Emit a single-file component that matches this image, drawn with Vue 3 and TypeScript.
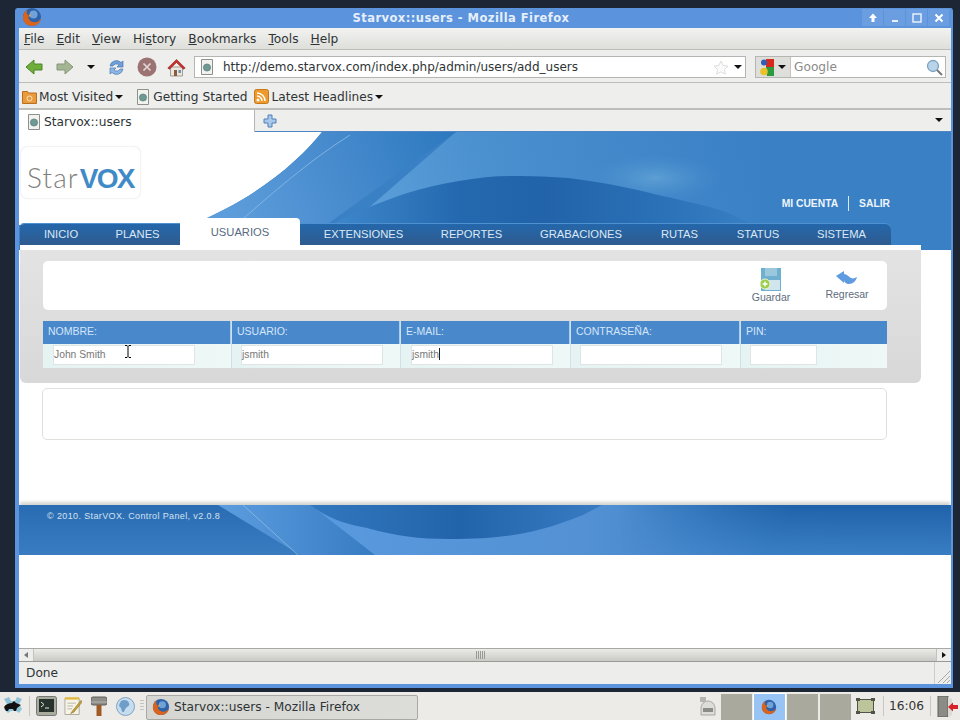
<script setup lang="ts">
const menus = [
  { key: 'F', rest: 'ile', pre: '' },
  { key: 'E', rest: 'dit', pre: '' },
  { key: 'V', rest: 'iew', pre: '' },
  { key: 's', rest: 'tory', pre: 'Hi' },
  { key: 'B', rest: 'ookmarks', pre: '' },
  { key: 'T', rest: 'ools', pre: '' },
  { key: 'H', rest: 'elp', pre: '' }
]

const navLeft = [
  { label: 'INICIO', width: 82 },
  { label: 'PLANES', width: 71 }
]
const navRight = [
  { label: 'EXTENSIONES', width: 119 },
  { label: 'REPORTES', width: 97 },
  { label: 'GRABACIONES', width: 122 },
  { label: 'RUTAS', width: 75 },
  { label: 'STATUS', width: 82 },
  { label: 'SISTEMA', width: 85 }
]

const columns = [
  { label: 'NOMBRE:', width: 189, pad: 10, input: 142, value: 'John Smith', caret: false },
  { label: 'USUARIO:', width: 169, pad: 9, input: 142, value: 'jsmith', caret: false },
  { label: 'E-MAIL:', width: 170, pad: 10, input: 142, value: 'jsmith', caret: true },
  { label: 'CONTRASEÑA:', width: 170, pad: 9, input: 142, value: '', caret: false },
  { label: 'PIN:', width: 146, pad: 9, input: 67, value: '', caret: false }
]

const workspaces = [false, true, false, false]
</script>

<template>
  <div class="desktop">
    <svg class="defs" width="0" height="0" aria-hidden="true">
      <symbol id="fox" viewBox="0 0 20 20">
        <circle cx="10" cy="10" r="9" fill="#2f62a8" />
        <circle cx="11.5" cy="7.5" r="4" fill="#6fa2d8" />
        <path d="M5 2.5C2 5 .8 8 1 11c.4 5 4.5 8 9 8 5 0 8.5-3.5 9-7.5-1.500 2.500-4 4-6.800 3.800C8.500 15 6 12.500 6.500 9 4.800 7.500 4.500 5 5 2.500z" fill="#d9641e" />
        <path d="M6.500 9c.5-1.500 1.800-1.800 3-1.500-1 .5-1.500 1.500-1 2.500z" fill="#f0a030" />
      </symbol>
      <symbol id="page" viewBox="0 0 14 16">
        <path d="M1.500.5h11v15h-11z" fill="#f2f2ee" stroke="#8d918c" />
        <circle cx="7" cy="8.500" r="3.600" fill="#6f9a94" stroke="#4f6f70" stroke-width=".6" />
      </symbol>
    </svg>

    <div class="window">
      <header class="titlebar">
        <svg class="title-fox" width="20" height="20"><use href="#fox" /></svg>
        <span class="title-text">Starvox::users - Mozilla Firefox</span>
        <div class="win-buttons">
          <span class="win-btn">
            <svg width="12" height="12" viewBox="0 0 12 12"><path d="M6 1.500 10 6H7.500v4h-3V6H2z" fill="#fff" /></svg>
          </span>
          <span class="win-btn">
            <svg width="12" height="12" viewBox="0 0 12 12"><path d="M3 8h6v2H3z" fill="#e8f0fa" /></svg>
          </span>
          <span class="win-btn">
            <svg width="12" height="12" viewBox="0 0 12 12"><path d="M2 2h8v8H2z" fill="none" stroke="#e8f0fa" stroke-width="1.500" /></svg>
          </span>
          <span class="win-btn">
            <svg width="12" height="12" viewBox="0 0 12 12"><path d="m2.500 2.500 7 7m0-7-7 7" stroke="#fff" stroke-width="2" /></svg>
          </span>
        </div>
      </header>

      <nav class="menubar">
        <span v-for="m in menus" :key="m.key + m.rest" class="menu-item">{{ m.pre }}<u>{{ m.key }}</u>{{ m.rest }}</span>
      </nav>

      <div class="toolbar">
        <svg width="18" height="16" viewBox="0 0 18 16" class="tb-back">
          <path d="M1 8 9 1v4h8v6H9v4z" fill="#6fae3a" stroke="#4c8526" />
        </svg>
        <svg width="18" height="16" viewBox="0 0 18 16" class="tb-forward">
          <path d="M17 8 9 1v4H1v6h8v4z" fill="#a3b592" stroke="#87987a" />
        </svg>
        <span class="tri tb-drop"></span>
        <svg width="19" height="19" viewBox="0 0 19 19" class="tb-reload">
          <path d="M3 8a6.500 6.500 0 0 1 11-3.500L16 3v6h-6l2-2a3.800 3.800 0 0 0-6 1z" fill="#6f9fd8" stroke="#4a78b2" stroke-width=".7" />
          <path d="M16 11a6.500 6.500 0 0 1-11 3.500L3 16v-6h6l-2 2a3.800 3.800 0 0 0 6-1z" fill="#8db6e4" stroke="#4a78b2" stroke-width=".7" />
        </svg>
        <svg width="20" height="20" viewBox="0 0 20 20" class="tb-stop">
          <circle cx="10" cy="10" r="9.500" fill="#9c7373" />
          <path d="m6.500 6.500 7 7m0-7-7 7" stroke="#e6d8d8" stroke-width="1.600" />
        </svg>
        <svg width="19" height="19" viewBox="0 0 19 19" class="tb-home">
          <path d="M3.500 9v9h12V9z" fill="#e9e7e0" stroke="#8a7a70" stroke-width=".7" />
          <path d="M.8 10 9.500 1.500 18.200 10l-1.700 1.200-7-6.700-7 6.700z" fill="#c8322c" stroke="#8f1f1c" stroke-width=".6" />
          <path d="M7 12h3v6H7z" fill="#8d5a3c" /><path d="M11.500 12h2.500v3h-2.500z" fill="#6c8fb0" />
        </svg>
        <div class="urlbar">
          <svg width="14" height="16" class="url-fav"><use href="#page" /></svg>
          <span class="url-text">http://demo.starvox.com/index.php/admin/users/add_users</span>
          <svg width="16" height="15" viewBox="0 0 16 15" class="url-star">
            <path d="m8 1 2.100 4.500 4.900.6-3.600 3.300 1 4.800L8 11.800 3.600 14.200l1-4.800L1 6.100l4.900-.6z" fill="#fbfbfb" stroke="#dcdcd8" />
          </svg>
          <span class="tri"></span>
        </div>
        <div class="searchbar">
          <div class="engine">
            <svg width="17" height="18" viewBox="0 0 17 18">
              <path d="M8 1h8v9H8z" fill="#d8281e" /><path d="M8 9h8v9H9z" fill="#2f9a3c" />
              <circle cx="6" cy="4.500" r="3" fill="#2f5fb4" /><circle cx="6" cy="13.500" r="3.800" fill="#e8c228" />
            </svg>
            <span class="tri"></span>
          </div>
          <span class="search-text">Google</span>
          <svg width="17" height="17" viewBox="0 0 17 17" class="search-glass">
            <circle cx="7" cy="7" r="5.500" fill="#b8d4ea" stroke="#7fa3bf" stroke-width="1.300" />
            <path d="m11 11 5 5" stroke="#777" stroke-width="2" />
          </svg>
        </div>
      </div>

      <div class="bookmarks">
        <svg width="15" height="15" viewBox="0 0 15 15">
          <path d="M.5 2.500h5l1 1.500h8v10.500H.5z" fill="#e99a3c" stroke="#b96f1e" /><circle cx="7.500" cy="9.500" r="2.500" fill="none" stroke="#fbe4c0" />
        </svg>
        <span class="bm-label bm-most">Most Visited</span>
        <span class="tri"></span>
        <svg width="14" height="16" class="bm-getting"><use href="#page" /></svg>
        <span class="bm-label">Getting Started</span>
        <svg width="15" height="15" viewBox="0 0 15 15" class="bm-rss">
          <rect x=".5" y=".5" width="14" height="14" rx="2" fill="#ee9a2c" stroke="#c77818" />
          <circle cx="4" cy="11" r="1.500" fill="#fff" />
          <path d="M3 7a5 5 0 0 1 5 5M3 4a8 8 0 0 1 8 8" fill="none" stroke="#fff" stroke-width="1.500" />
        </svg>
        <span class="bm-label">Latest Headlines</span>
        <span class="tri"></span>
      </div>

      <div class="tabbar">
        <div class="tab">
          <svg width="14" height="16"><use href="#page" /></svg>
          <span>Starvox::users</span>
        </div>
        <svg width="14" height="14" viewBox="0 0 14 14" class="tab-new">
          <path d="M5 1h4v4h4v4H9v4H5V9H1V5h4z" fill="#a9c8ec" stroke="#4f80b8" />
        </svg>
        <span class="tri tab-list"></span>
      </div>

      <main class="content">
        <section class="banner">
          <svg class="banner-art" viewBox="19 132 932 118" preserveAspectRatio="none" aria-hidden="true">
            <defs>
              <linearGradient id="bannerBase" gradientUnits="userSpaceOnUse" x1="330" y1="228" x2="760" y2="132">
                <stop offset="0" stop-color="#5fa2dc" />
                <stop offset=".4" stop-color="#4a8fce" />
                <stop offset="1" stop-color="#3a80c5" />
              </linearGradient>
              <linearGradient id="bannerMid" gradientUnits="userSpaceOnUse" x1="230" y1="225" x2="450" y2="132">
                <stop offset="0" stop-color="#5d9ddb" />
                <stop offset=".45" stop-color="#4a8dcf" />
                <stop offset="1" stop-color="#2d79bf" />
              </linearGradient>
              <linearGradient id="bannerDark" gradientUnits="userSpaceOnUse" x1="330" y1="0" x2="760" y2="0">
                <stop offset="0" stop-color="#3f88cc" />
                <stop offset=".3" stop-color="#2469af" />
                <stop offset=".5" stop-color="#2263a9" />
                <stop offset=".75" stop-color="#2a70b6" />
                <stop offset="1" stop-color="#3a80c5" />
              </linearGradient>
              <radialGradient id="bannerGlow">
                <stop offset="0" stop-color="#5d9fd4" />
                <stop offset="1" stop-color="#4a8fce" stop-opacity="0" />
              </radialGradient>
            </defs>
            <path d="M322 132C300 160 255 200 190 225H19V250H951V132z" fill="#3a80c5" />
            <path d="M456 132H760V250H320z" fill="url(#bannerBase)" />
            <path d="M322 132C300 160 255 200 190 225H326L456 132z" fill="url(#bannerMid)" />
            <path d="M236 225C270 195 310 160 350 135" fill="none" stroke="#8cbce6" stroke-width=".8" />
            <ellipse cx="655" cy="178" rx="65" ry="24" fill="url(#bannerGlow)" />
            <path d="M326 228C350 214 378 203 404 194 440 183 480 176 511 176 540 176 565 177 583 180 610 184 630 188 654 194 680 200 705 205 726 212L770 232V250H320z" fill="url(#bannerDark)" />
          </svg>
          <div class="logo">
            <span class="logo-star">Star</span><span class="logo-vox">VOX</span>
          </div>
          <div class="account">
            <span>MI CUENTA</span>
            <i class="account-sep"></i>
            <span>SALIR</span>
          </div>
          <div class="nav">
            <span v-for="n in navLeft" :key="n.label" class="nav-item" :style="{ width: n.width + 'px' }">{{ n.label }}</span>
            <span class="nav-active">USUARIOS</span>
            <span v-for="n in navRight" :key="n.label" class="nav-item" :style="{ width: n.width + 'px' }">{{ n.label }}</span>
          </div>
        </section>

        <section class="panel">
          <div class="actions">
            <div class="action action-save">
              <svg width="22" height="23" viewBox="0 0 22 23">
                <path d="M1 0h20v23H1z" fill="#6fb0d0" />
                <path d="M5 0h12v8H5z" fill="#9cc8de" />
                <path d="M5 12h15v10H5z" fill="#cfe6ee" />
                <circle cx="5" cy="16" r="5" fill="#9ccc4c" stroke="#e8f4d0" />
                <path d="M5 13.500v5M2.500 16h5" stroke="#fff" stroke-width="1.400" />
              </svg>
              <span>Guardar</span>
            </div>
            <div class="action action-back">
              <svg width="22" height="14" viewBox="0 0 22 14">
                <path d="M0 5 8 0v3c3 0 5 3 7 4 2 .8 4 .3 6-1-1 4-4 7-8 7-3 0-5-2-5-4v3z" fill="#5f9be0" />
              </svg>
              <span>Regresar</span>
            </div>
          </div>
          <div class="grid">
            <div v-for="c in columns" :key="c.label" class="col" :style="{ width: c.width + 'px' }">
              <div class="col-head">{{ c.label }}</div>
              <div class="col-cell" :style="{ paddingLeft: c.pad + 'px' }">
                <div class="field" :style="{ width: c.input + 'px' }">{{ c.value }}<i v-if="c.caret" class="caret"></i></div>
              </div>
            </div>
            <svg class="ibeam" width="8" height="13" viewBox="0 0 8 13" aria-hidden="true">
              <path d="M1 .5h2l1 1 1-1h2M4 1.500v10M1 12.500h2l1-1 1 1h2" fill="none" stroke="#000" stroke-width="1" />
            </svg>
          </div>
        </section>

        <section class="notice"></section>

        <footer class="page-footer">
          <svg class="footer-art" viewBox="19 505 932 50" preserveAspectRatio="none" aria-hidden="true">
            <defs>
              <linearGradient id="footLeft" x1="0" x2="0" y1="0" y2="1">
                <stop offset="0" stop-color="#2a6cb2" />
                <stop offset="1" stop-color="#3a7cc0" />
              </linearGradient>
              <linearGradient id="footBand" gradientUnits="userSpaceOnUse" x1="220" y1="0" x2="375" y2="0">
                <stop offset="0" stop-color="#5c9ddf" />
                <stop offset="1" stop-color="#377bc2" />
              </linearGradient>
              <linearGradient id="footLight" gradientUnits="userSpaceOnUse" x1="340" y1="0" x2="950" y2="0">
                <stop offset="0" stop-color="#5898dc" />
                <stop offset=".4" stop-color="#5391d4" />
                <stop offset=".7" stop-color="#3a7fc4" />
                <stop offset="1" stop-color="#397dc3" />
              </linearGradient>
              <linearGradient id="footDark" gradientUnits="userSpaceOnUse" x1="310" y1="0" x2="610" y2="0">
                <stop offset="0" stop-color="#3278bf" />
                <stop offset=".5" stop-color="#2264aa" />
                <stop offset="1" stop-color="#3a7dc4" />
              </linearGradient>
              <linearGradient id="footFade" gradientUnits="userSpaceOnUse" x1="620" y1="0" x2="790" y2="0">
                <stop offset="0" stop-color="#2163aa" stop-opacity="0" />
                <stop offset="1" stop-color="#2163aa" />
              </linearGradient>
              <linearGradient id="footFadeMask" x1="0" x2="0" y1="0" y2="1">
                <stop offset="0" stop-color="#fff" />
                <stop offset="1" stop-color="#000" />
              </linearGradient>
              <mask id="footMask" maskUnits="userSpaceOnUse" x="620" y="505" width="331" height="50">
                <rect x="620" y="505" width="331" height="50" fill="url(#footFadeMask)" />
              </mask>
            </defs>
            <path d="M19 505H951V555H19z" fill="url(#footLeft)" />
            <path d="M218 505 300 555H375L310 505z" fill="url(#footBand)" />
            <path d="M243 505 298 555" stroke="#8cbce6" stroke-width=".8" fill="none" />
            <path d="M310 505 375 555H951V505z" fill="url(#footLight)" />
            <rect x="620" y="505" width="331" height="50" fill="url(#footFade)" mask="url(#footMask)" />
            <path d="M310 505C330 520 350 525 367 528 395 536 420 539 449 539 480 539 505 537 525 533 550 528 570 520 583 515L602 505z" fill="url(#footDark)" />
          </svg>
          <span class="copyright">© 2010. StarVOX. Control Panel, v2.0.8</span>
        </footer>
      </main>

      <div class="scrollbar">
        <span class="sb-btn"><i class="sb-left"></i></span>
        <div class="sb-thumb"><i class="sb-grip"></i></div>
        <span class="sb-btn"><i class="sb-right"></i></span>
      </div>

      <div class="statusbar">
        <span>Done</span>
        <div class="resize">
          <svg width="14" height="14" viewBox="0 0 14 14"><path d="M13 1 1 13M13 6l-7 7M13 10l-3 3" stroke="#a9a9a4" fill="none" /></svg>
        </div>
      </div>
    </div>

    <div class="panelbar">
      <svg width="20" height="20" viewBox="0 0 20 20" class="pb-mouse">
        <path d="M1 3 6 1l2 4h4l2-4 5 2-3 5 3 5-3 4-3-2H8l-3 2-4-4 3-5z" fill="#8fc4d8" />
        <path d="M1 11c2-3 5-4 8-4l2-2 2 2 5 2-4 3-1 3h-2l-1-2H6l-1 2H3z" fill="#111" />
      </svg>
      <i class="pb-sep"></i>
      <svg width="21" height="20" viewBox="0 0 21 20" class="pb-term">
        <rect x=".5" y=".5" width="20" height="19" rx="2" fill="#a8ac9c" stroke="#777" />
        <rect x="3" y="3" width="15" height="13" fill="#27322c" />
        <path d="m5 6 3 2.500L5 11M9 12h4" stroke="#dfe8df" fill="none" />
      </svg>
      <svg width="18" height="20" viewBox="0 0 19 20" class="pb-note">
        <path d="M1 2h15v17H1z" fill="#f6f4e8" stroke="#aaa89a" />
        <path d="M1 2h15" stroke="#e2b93a" stroke-width="2.500" />
        <path d="M3.500 7h9M3.500 10h6M3.500 13h5" stroke="#b8b6a8" />
        <path d="M18 4 9 15l-2 3 3.500-1.500L19 6z" fill="#c9a13c" stroke="#7a6420" stroke-width=".5" />
      </svg>
      <svg width="16" height="20" viewBox="0 0 16 20" class="pb-hammer">
        <rect x="0" y="1" width="16" height="8" rx="2" fill="#8e8e88" stroke="#5f5f5a" />
        <path d="M0 6h16" stroke="#b5b5ae" />
        <path d="M5.500 9h5v11h-5z" fill="#a05a26" />
      </svg>
      <svg width="19" height="19" viewBox="0 0 19 19" class="pb-globe">
        <circle cx="9.500" cy="9.500" r="9" fill="#c6dcef" stroke="#7fa3c3" />
        <path d="M5 4c3-2 7-1 8 2s-1 3-3 5-1 4-3 4-1-4-3-5 0-4 1-6z" fill="#6f9dc8" />
      </svg>
      <i class="pb-handle"></i>
      <div class="task">
        <svg width="18" height="18"><use href="#fox" /></svg>
        <span>Starvox::users - Mozilla Firefox</span>
      </div>
      <div class="tray">
        <svg width="20" height="21" viewBox="0 0 20 21" class="pb-tray">
          <path d="M3 12a7 7 0 0 1 14 0v7H3z" fill="#dcdcd8" stroke="#a8a8a4" />
          <path d="M5 12h10v4H5z" fill="#8c8c88" />
          <path d="M2 1h6v5H2z" fill="#b4b4b0" />
        </svg>
        <div class="workspaces">
          <span v-for="(w, i) in workspaces" :key="i" class="ws" :class="{ 'ws-active': w }">
            <svg v-if="w" width="16" height="16"><use href="#fox" /></svg>
          </span>
        </div>
        <svg width="19" height="16" viewBox="0 0 19 16" class="pb-shot">
          <rect x="1.500" y="1.500" width="16" height="13" rx="1" fill="#bcc49a" stroke="#4f5348" />
          <path d="M0 0h4v3H0zM15 0h4v3h-4zM0 13h4v3H0zM15 13h4v3h-4z" fill="#4f5348" />
        </svg>
        <i class="pb-sep pb-sep-clock"></i>
        <span class="clock">16:06</span>
        <i class="pb-sep pb-sep-end"></i>
        <svg width="21" height="21" viewBox="0 0 21 21" class="pb-exit">
          <path d="M1 0h10v21H1z" fill="#8c8c86" stroke="#5f5f5a" />
          <path d="M11 1 15 3v16l-4 2z" fill="#dcdcd6" />
          <path d="M11 11 16 6.500V9h5v4h-5v2.500z" fill="#d8222a" />
        </svg>
      </div>
    </div>
  </div>
</template>

<style>
html,
body {
  margin: 0;
  background: #1c2634;
}
</style>

<style scoped>
.desktop {
  width: 960px;
  height: 720px;
  overflow: hidden;
  display: flex;
  flex-direction: column;
  padding-top: 8px;
  box-sizing: border-box;
  background: #1c2634;
  font-family: "DejaVu Sans", sans-serif;
  font-size: 12.2px;
  color: #2e3436;
}
.defs {
  position: absolute;
}
.window {
  width: 938px;
  height: 680px;
  margin-left: 15px;
  box-sizing: border-box;
  border: solid #5b93dc;
  border-width: 0 2px 4px 4px;
  border-radius: 3px 3px 0 0;
  display: flex;
  flex-direction: column;
  background: #ededeb;
}
.titlebar {
  height: 20px;
  display: flex;
  align-items: center;
  justify-content: center;
  padding-right: 48px;
  position: relative;
  background: #5b93dc;
  color: #e6effa;
  font-size: 11.5px;
  font-weight: bold;
  letter-spacing: .45px;
  flex: none;
}
.title-fox {
  position: absolute;
  left: 3px;
  top: -1px;
}
.win-buttons {
  position: absolute;
  right: 2px;
  top: 1px;
  display: flex;
  gap: 1px;
}
.win-btn {
  width: 21px;
  height: 17px;
  display: flex;
  align-items: center;
  justify-content: center;
  background: #6a9ee0;
}
.menubar {
  height: 22px;
  flex: none;
  display: flex;
  align-items: center;
  padding-left: 5px;
  gap: 12px;
  box-sizing: border-box;
  background: linear-gradient(#f2f2f0, #dededb);
  border-bottom: 1px solid #bdbdb9;
}
.toolbar {
  height: 33px;
  flex: none;
  box-sizing: border-box;
  display: flex;
  align-items: center;
  padding: 2px 0 0 6px;
  background: #eeeeec;
  border-bottom: 1px solid #bdbdb9;
}
.tri {
  width: 0;
  height: 0;
  flex: none;
  border: solid transparent;
  border-width: 4px 4px 0;
  border-top-color: #111;
}
.tb-forward {
  margin-left: 13px;
}
.tb-drop {
  margin-left: 13px;
}
.tb-reload {
  margin-left: 12px;
}
.tb-stop {
  margin-left: 11px;
}
.tb-home {
  margin-left: 10px;
}
.urlbar {
  width: 552px;
  height: 22px;
  margin-left: 8px;
  box-sizing: border-box;
  display: flex;
  align-items: center;
  background: #fff;
  border: 1px solid #b5b5b1;
  padding: 0 3px 0 5px;
}
.url-text {
  margin-left: 9px;
  flex: 1;
  font-size: 12px;
  color: #2e3436;
}
.url-star {
  margin-right: 5px;
}
.searchbar {
  width: 191px;
  height: 22px;
  margin-left: 9px;
  box-sizing: border-box;
  display: flex;
  align-items: center;
  background: #fff;
  border: 1px solid #b5b5b1;
}
.engine {
  width: 35px;
  height: 20px;
  flex: none;
  display: flex;
  align-items: center;
  gap: 3px;
  padding-left: 2px;
  box-sizing: border-box;
  background: #dededa;
  border-right: 1px solid #c4c4c0;
}
.search-text {
  flex: 1;
  margin-left: 3px;
  color: #8b8b87;
}
.search-glass {
  margin-right: 2px;
}
.bookmarks {
  height: 27px;
  flex: none;
  box-sizing: border-box;
  display: flex;
  align-items: center;
  padding: 2px 0 0 3px;
  background: #eeeeec;
  border-bottom: 2px solid #bdbdb9;
}
.bm-label {
  margin-left: 2px;
}
.bm-most + .tri {
  margin-left: 2px;
}
.bm-getting {
  margin-left: 13px;
  margin-right: 1px;
}
.bm-rss {
  margin-left: 7px;
}
.bookmarks .bm-label + .tri:last-child {
  margin-left: 2px;
}
.tabbar {
  height: 22px;
  flex: none;
  display: flex;
  align-items: flex-start;
  position: relative;
  background: #eeeeec;
  border-bottom: 1px solid #4f86c6;
  box-sizing: border-box;
}
.tab {
  width: 236px;
  height: 22px;
  box-sizing: border-box;
  padding: 2px 0 0 8px;
  display: flex;
  align-items: center;
  gap: 3px;
  background: #fff;
  border-right: 1px solid #b5b5b1;
  position: relative;
}
.tab-new {
  margin: 4px 0 0 8px;
}
.tab-list {
  margin: 8px 0 0 auto;
  margin-right: 8px;
}
.content {
  height: 516px;
  flex: none;
  background: #fff;
  display: flex;
  flex-direction: column;
  font-family: "Liberation Sans", Arial, sans-serif;
  overflow: hidden;
}
.banner {
  height: 118px;
  flex: none;
  position: relative;
  display: flex;
  flex-direction: column;
}
.banner-art {
  position: absolute;
  inset: 0;
  width: 100%;
  height: 100%;
}
.logo {
  position: relative;
  width: 119px;
  height: 51px;
  margin: 15px 0 0 2px;
  box-sizing: border-box;
  padding-top: 15px;
  padding-left: 6px;
  background: #fff;
  border-radius: 6px;
  box-shadow: 0 0 2px rgba(120, 120, 120, .35);
  white-space: nowrap;
  line-height: 30px;
}
.logo-star {
  font-size: 28px;
  letter-spacing: 1.1px;
  color: #807f7c;
  font-family: "Lato", "Liberation Sans", sans-serif;
  font-weight: 300;
}
.logo-vox {
  font-size: 28px;
  margin-left: 1px;
  font-weight: bold;
  letter-spacing: -1.8px;
  color: #3f8bc8;
}
.account {
  position: relative;
  display: flex;
  align-items: center;
  justify-content: flex-end;
  height: 16px;
  margin: -3px 61px 0 0;
  color: #eef5fc;
  font-size: 10.3px;
  font-weight: bold;
}
.account-sep {
  width: 1px;
  height: 15px;
  margin: 0 10px;
  background: #dbe9f6;
}
.nav {
  position: absolute;
  left: 1px;
  top: 92px;
  width: 871px;
  height: 21px;
  display: flex;
  background: linear-gradient(#2467ab, #2f5b8f);
  border-radius: 4px 6px 0 0;
  box-shadow: 0 -1px 0 #4f90d0;
  color: #dce8f4;
  font-size: 11.2px;
}
.nav-item {
  flex: none;
  display: flex;
  align-items: center;
  justify-content: center;
  padding-bottom: 2px;
  box-sizing: border-box;
}
.nav-active {
  flex: none;
  width: 120px;
  height: 27px;
  margin: -6px 4px 0 7px;
  display: flex;
  align-items: center;
  justify-content: center;
  box-sizing: border-box;
  background: #fff;
  color: #566a80;
  border-radius: 4px 4px 0 0;
}
.panel {
  width: 901px;
  height: 138px;
  flex: none;
  box-sizing: border-box;
  margin: -5px 0 0 1px;
  position: relative;
  padding: 16px 34px 0 23px;
  background: linear-gradient(#fff 5px, #e2e3e2 5px, #d7d8d7 100%);
  border-radius: 0 0 6px 6px;
  display: flex;
  flex-direction: column;
}
.actions {
  height: 49px;
  flex: none;
  display: flex;
  justify-content: flex-end;
  background: #fff;
  border-radius: 5px;
  font-size: 10.5px;
  color: #5d6b7c;
}
.action {
  display: flex;
  flex-direction: column;
  align-items: center;
}
.action-save {
  width: 60px;
  padding-top: 7px;
  margin-right: 16px;
}
.action-back {
  width: 60px;
  padding-top: 10px;
  margin-right: 10px;
  gap: 3px;
}
.grid {
  margin-top: 11px;
  display: flex;
  position: relative;
  width: 844px;
}
.col {
  flex: none;
  border-right: 1px solid #cfe0e8;
  box-sizing: border-box;
}
.col:last-of-type {
  border-right: 0;
}
.col-head {
  height: 23px;
  box-sizing: border-box;
  padding: 4px 0 0 5px;
  background: #4a88cc;
  color: #d4e6f7;
  font-size: 10.5px;
  border-right: 1px solid #a8cdee;
}
.col:last-of-type .col-head {
  border-right: 0;
}
.col-cell {
  height: 24px;
  box-sizing: border-box;
  padding-top: 1px;
  background: linear-gradient(90deg, #e6f3f3, #eef8f7);
}
.field {
  height: 20px;
  box-sizing: border-box;
  padding: 0 0 2px;
  display: flex;
  align-items: center;
  background: #fff;
  border: 1px solid #dfe5e5;
  font-size: 10.3px;
  color: #777;
}
.caret {
  width: 1px;
  height: 12px;
  background: #222;
}
.ibeam {
  position: absolute;
  left: 81px;
  top: 24px;
}
.notice {
  width: 845px;
  height: 52px;
  flex: none;
  box-sizing: border-box;
  margin: 5px 0 0 23px;
  background: #fff;
  border: 1px solid #dfdfdc;
  border-radius: 5px;
}
.page-footer {
  height: 50px;
  flex: none;
  margin-top: 65px;
  position: relative;
  box-shadow: 0 -4px 3px -1px #d4d4d0;
}
.footer-art {
  position: absolute;
  inset: 0;
  width: 100%;
  height: 100%;
}
.copyright {
  position: absolute;
  left: 28px;
  top: 6px;
  font-size: 9px;
  letter-spacing: .38px;
  color: #d2e2f2;
}
.scrollbar {
  height: 14px;
  flex: none;
  box-sizing: border-box;
  display: flex;
  background: #cfcfcc;
  border-top: 1px solid #a8a8a4;
  border-bottom: 1px solid #9a9a96;
}
.sb-btn {
  width: 14px;
  flex: none;
  display: flex;
  align-items: center;
  justify-content: center;
  background: #ededeb;
}
.sb-left {
  border: solid transparent;
  border-width: 3px 4px 3px 0;
  border-right-color: #777;
}
.sb-right {
  border: solid transparent;
  border-width: 3px 0 3px 4px;
  border-left-color: #111;
}
.sb-thumb {
  flex: 1;
  display: flex;
  align-items: center;
  justify-content: center;
  background: linear-gradient(#ebebe8, #c9c9c5);
  border: solid #c2c2be;
  border-width: 0 1px;
}
.sb-grip {
  width: 9px;
  height: 8px;
  margin-right: 10px;
  background: repeating-linear-gradient(90deg, #999 0 1px, transparent 1px 2px);
}
.statusbar {
  flex: 1;
  display: flex;
  align-items: center;
  justify-content: space-between;
  padding-left: 7px;
  background: #ededeb;
}
.resize {
  width: 17px;
  height: 100%;
  box-sizing: border-box;
  display: flex;
  align-items: flex-end;
  justify-content: flex-end;
  border-left: 1px solid #cdcdc9;
}
.panelbar {
  height: 28px;
  margin-top: 4px;
  flex: none;
  display: flex;
  align-items: center;
  padding-left: 3px;
  background: #edebe7;
}
.pb-sep {
  width: 1px;
  height: 20px;
  flex: none;
  margin-left: 6px;
  background: #c8c6c0;
}
.pb-term {
  margin-left: 6px;
}
.pb-note {
  margin-left: 7px;
}
.pb-hammer {
  margin-left: 9px;
}
.pb-globe {
  margin-left: 9px;
}
.pb-handle {
  width: 4px;
  height: 12px;
  margin-left: 5px;
  background: repeating-linear-gradient(#c4c4be 0 1px, transparent 1px 3px);
}
.task {
  width: 272px;
  height: 25px;
  margin-left: 2px;
  margin-top: 2px;
  flex: none;
  box-sizing: border-box;
  display: flex;
  align-items: center;
  gap: 4px;
  padding-left: 5px;
  background: linear-gradient(90deg, #d5d5d1, #dcdcd9);
  border: 1px solid #a8a8a4;
  border-radius: 2px;
}
.tray {
  margin-left: auto;
  display: flex;
  align-items: center;
}
.workspaces {
  display: flex;
  gap: 2px;
  margin-left: 3px;
  margin-top: 1px;
}
.ws {
  width: 31px;
  height: 26px;
  display: flex;
  align-items: center;
  justify-content: center;
  background: #a9a99d;
}
.ws-active {
  background: #98c4f5;
  box-shadow: 0 0 0 1px #fff;
}
.pb-shot {
  margin-left: 5px;
}
.pb-sep-clock {
  margin-left: 8px;
}
.pb-sep-end {
  margin-left: 0;
}
.clock {
  margin: 0 6px 0 5px;
  color: #333;
}
.pb-exit {
  margin-left: 6px;
  margin-right: 2px;
}
</style>
